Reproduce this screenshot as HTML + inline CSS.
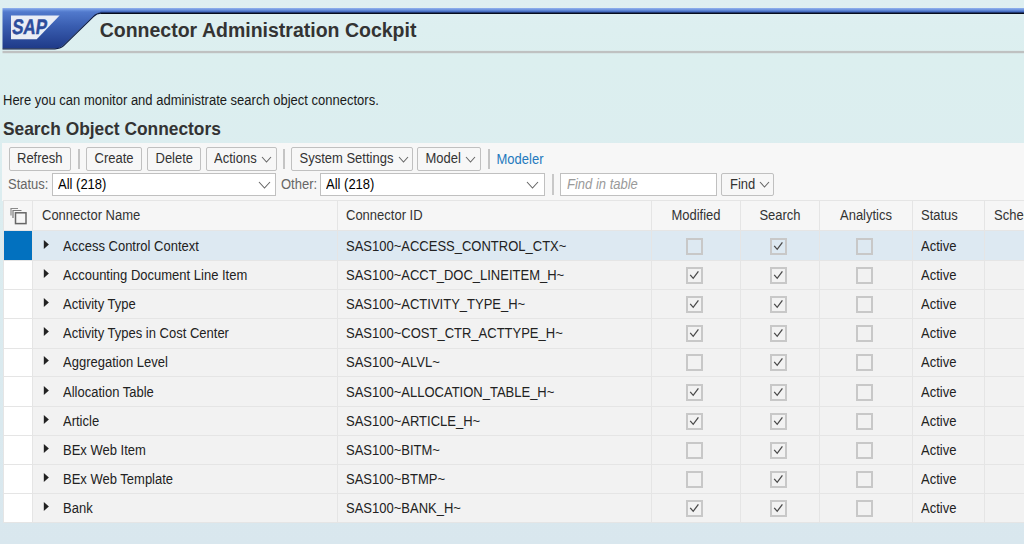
<!DOCTYPE html>
<html><head><meta charset="utf-8"><style>
html,body{margin:0;padding:0;}
body{width:1024px;height:544px;overflow:hidden;position:relative;background:linear-gradient(#deeff1 0px,#dcefef 60px,#dcedf0 200px,#d9e7ee 544px);font-family:"Liberation Sans",sans-serif;font-size:13px;color:#222;}
.abs{position:absolute;}
.t{position:absolute;line-height:15px;white-space:nowrap;font-size:13px;transform:scaleY(1.08);transform-origin:0 12px;}
.title{font-size:19.5px;font-weight:bold;line-height:20px;color:#333;}
.h2{font-size:17.35px;font-weight:bold;line-height:18px;color:#333;}
.btn{position:absolute;box-sizing:border-box;border:1px solid #c0c0c0;border-radius:2px;background:#f7f7f7;}
.inp{position:absolute;box-sizing:border-box;border:1px solid #c0c0c0;background:#fff;}
</style></head><body>

<svg class="abs" style="left:0;top:0" width="1024" height="56">
  <defs>
    <linearGradient id="bg1" gradientUnits="userSpaceOnUse" x1="0" y1="8" x2="0" y2="48.5">
      <stop offset="0" stop-color="#93b3ee"/>
      <stop offset="0.05" stop-color="#6890dc"/>
      <stop offset="0.1" stop-color="#5179cc"/>
      <stop offset="0.45" stop-color="#395db0"/>
      <stop offset="1" stop-color="#1f3a88"/>
    </linearGradient>
  </defs>
  <linearGradient id="bar2" gradientUnits="userSpaceOnUse" x1="0" y1="8" x2="0" y2="14">
      <stop offset="0" stop-color="#93b3ee"/>
      <stop offset="0.35" stop-color="#6890dc"/>
      <stop offset="0.65" stop-color="#3c62b8"/>
      <stop offset="0.82" stop-color="#0d1a3c"/>
      <stop offset="1" stop-color="#000"/>
  </linearGradient>
  <path d="M2.5 8 H1024 V13 H101 C97.5 13 95.5 14 93 16.5 L63 45.5 C60.5 47.8 58.5 48.3 55 48.3 H2.5 Z" fill="url(#bg1)"/>
  <rect x="100.5" y="8" width="925" height="6" fill="url(#bar2)"/>
  <path d="M101 13.2 C97.5 13.2 95.8 14.2 93.4 16.6 L63.4 45.9 C60.9 48.2 58.5 48.8 55 48.8 H2.5" fill="none" stroke="#0c1b45" stroke-width="1.2"/>
  <path d="M11 15.6 H59.6 L36.7 39.3 H11 Z" fill="#e9edf6"/>
  <text x="12.6" y="34.3" font-family="Liberation Sans" font-weight="bold" font-size="21" fill="#2c4c9c" stroke="#2c4c9c" stroke-width="0.5" textLength="34.5" lengthAdjust="spacingAndGlyphs" transform="translate(0,27) skewX(-8) translate(0,-27)">SAP</text>
  <rect x="2.5" y="50.9" width="1022" height="2.3" fill="#bfc1c1"/>
</svg>

<div class="t title" style="left:99.7px;top:19.5px">Connector Administration Cockpit</div>
<div class="t " style="left:3px;top:93px;color:#1a1a1a">Here you can monitor and administrate search object connectors.</div>
<div class="t h2" style="left:3px;top:120px">Search Object Connectors</div>
<div class="abs" style="left:2px;top:143px;width:1022px;height:58px;background:#f7f7f7"></div>
<div class="btn" style="left:8.5px;top:147px;width:62.0px;height:24px"></div><div class="t " style="left:17.0px;top:150.5px;color:#333">Refresh</div>
<div class="abs" style="left:77.5px;top:149px;width:2px;height:20px;background:#c4c4c4"></div>
<div class="btn" style="left:86px;top:147px;width:55.5px;height:24px"></div><div class="t " style="left:94.5px;top:150.5px;color:#333">Create</div>
<div class="btn" style="left:147px;top:147px;width:53.5px;height:24px"></div><div class="t " style="left:155.5px;top:150.5px;color:#333">Delete</div>
<div class="btn" style="left:205.5px;top:147px;width:71.0px;height:24px"></div><div class="t " style="left:214.0px;top:150.5px;color:#333">Actions</div>
<svg class="abs" style="left:261px;top:155.5px" width="11" height="7"><path d="M1 1 L5.5 6 L10 1" fill="none" stroke="#666" stroke-width="1.1"/></svg>
<div class="abs" style="left:283px;top:149px;width:2px;height:20px;background:#c4c4c4"></div>
<div class="btn" style="left:291px;top:147px;width:122px;height:24px"></div><div class="t " style="left:299.5px;top:150.5px;color:#333">System Settings</div>
<svg class="abs" style="left:397.5px;top:155.5px" width="11" height="7"><path d="M1 1 L5.5 6 L10 1" fill="none" stroke="#666" stroke-width="1.1"/></svg>
<div class="btn" style="left:417px;top:147px;width:64px;height:24px"></div><div class="t " style="left:425.5px;top:150.5px;color:#333">Model</div>
<svg class="abs" style="left:464.5px;top:155.5px" width="11" height="7"><path d="M1 1 L5.5 6 L10 1" fill="none" stroke="#666" stroke-width="1.1"/></svg>
<div class="abs" style="left:487.5px;top:149px;width:2px;height:20px;background:#c4c4c4"></div>
<div class="t " style="left:496.5px;top:152px;color:#2479bd">Modeler</div>
<div class="t " style="left:8px;top:176.5px;color:#666">Status:</div>
<div class="inp" style="left:52px;top:172.5px;width:224px;height:23px"></div>
<div class="t " style="left:58px;top:176.5px;color:#000">All (218)</div>
<svg class="abs" style="left:257.5px;top:181px" width="13" height="8"><path d="M1 1 L6.5 7 L12 1" fill="none" stroke="#666" stroke-width="1.1"/></svg>
<div class="t " style="left:281px;top:176.5px;color:#666">Other:</div>
<div class="inp" style="left:320px;top:172.5px;width:225px;height:23px"></div>
<div class="t " style="left:326px;top:176.5px;color:#000">All (218)</div>
<svg class="abs" style="left:526px;top:181px" width="13" height="8"><path d="M1 1 L6.5 7 L12 1" fill="none" stroke="#666" stroke-width="1.1"/></svg>
<div class="abs" style="left:552px;top:174px;width:2px;height:21px;background:#c8c8c8"></div>
<div class="inp" style="left:560px;top:172.5px;width:156.5px;height:23px"></div>
<div class="t " style="left:567px;top:176.5px;color:#9a9a9a;font-style:italic">Find in table</div>
<div class="btn" style="left:721px;top:172.5px;width:53px;height:23px"></div>
<div class="t " style="left:730px;top:176.5px;color:#333">Find</div>
<svg class="abs" style="left:758.5px;top:181px" width="11" height="7"><path d="M1 1 L5.5 6 L10 1" fill="none" stroke="#666" stroke-width="1.1"/></svg>
<div class="abs" style="left:3px;top:200px;width:1021px;height:323px;background:#e5e5e5"></div>
<div class="abs" style="left:4px;top:201px;width:1020px;height:29px;background:#f6f6f6"></div>
<div class="abs" style="left:33px;top:231px;width:991px;height:29px;background:#dde9f2"></div>
<div class="abs" style="left:4px;top:231px;width:28px;height:29px;background:#0271bf"></div>
<div class="abs" style="left:33px;top:261px;width:991px;height:28px;background:#f2f2f2"></div>
<div class="abs" style="left:4px;top:261px;width:28px;height:28px;background:#fff"></div>
<div class="abs" style="left:33px;top:290px;width:991px;height:28px;background:#f2f2f2"></div>
<div class="abs" style="left:4px;top:290px;width:28px;height:28px;background:#fff"></div>
<div class="abs" style="left:33px;top:319px;width:991px;height:29px;background:#f2f2f2"></div>
<div class="abs" style="left:4px;top:319px;width:28px;height:29px;background:#fff"></div>
<div class="abs" style="left:33px;top:349px;width:991px;height:27px;background:#f2f2f2"></div>
<div class="abs" style="left:4px;top:349px;width:28px;height:27px;background:#fff"></div>
<div class="abs" style="left:33px;top:377px;width:991px;height:29px;background:#f2f2f2"></div>
<div class="abs" style="left:4px;top:377px;width:28px;height:29px;background:#fff"></div>
<div class="abs" style="left:33px;top:407px;width:991px;height:28px;background:#f2f2f2"></div>
<div class="abs" style="left:4px;top:407px;width:28px;height:28px;background:#fff"></div>
<div class="abs" style="left:33px;top:436px;width:991px;height:28px;background:#f2f2f2"></div>
<div class="abs" style="left:4px;top:436px;width:28px;height:28px;background:#fff"></div>
<div class="abs" style="left:33px;top:465px;width:991px;height:28px;background:#f2f2f2"></div>
<div class="abs" style="left:4px;top:465px;width:28px;height:28px;background:#fff"></div>
<div class="abs" style="left:33px;top:494px;width:991px;height:28px;background:#f2f2f2"></div>
<div class="abs" style="left:4px;top:494px;width:28px;height:28px;background:#fff"></div>
<div class="abs" style="left:32px;top:201px;width:1px;height:321px;background:#e5e5e5"></div>
<div class="abs" style="left:337px;top:201px;width:1px;height:321px;background:#e5e5e5"></div>
<div class="abs" style="left:651px;top:201px;width:1px;height:321px;background:#e5e5e5"></div>
<div class="abs" style="left:740px;top:201px;width:1px;height:321px;background:#e5e5e5"></div>
<div class="abs" style="left:819px;top:201px;width:1px;height:321px;background:#e5e5e5"></div>
<div class="abs" style="left:912px;top:201px;width:1px;height:321px;background:#e5e5e5"></div>
<div class="abs" style="left:984px;top:201px;width:1px;height:321px;background:#e5e5e5"></div>
<svg class="abs" style="left:8px;top:205px" width="22" height="22">
<path d="M3 10.5 V3.5 H10" fill="none" stroke="#8a8a8a" stroke-width="1.2"/>
<path d="M5 13 V5.5 H13.5" fill="none" stroke="#7a7a7a" stroke-width="1.2"/>
<rect x="7.5" y="7.8" width="10.5" height="10.8" fill="none" stroke="#666" stroke-width="1.5"/>
</svg>
<div class="t " style="left:42px;top:207.5px;color:#333">Connector Name</div>
<div class="t " style="left:346px;top:207.5px;color:#333">Connector ID</div>
<div class="t" style="left:652px;width:88px;text-align:center;top:207.5px;color:#333">Modified</div>
<div class="t" style="left:741px;width:78px;text-align:center;top:207.5px;color:#333">Search</div>
<div class="t" style="left:820px;width:92px;text-align:center;top:207.5px;color:#333">Analytics</div>
<div class="t " style="left:921px;top:207.5px;color:#333">Status</div>
<div class="t " style="left:994px;top:207.5px;color:#333">Schedule</div>
<svg class="abs" style="left:43px;top:239px" width="7" height="11"><path d="M0.8 0.9 L5.9 5.4 L0.8 9.9 Z" fill="#222"/></svg>
<div class="t " style="left:63px;top:239px;">Access Control Context</div>
<div class="t " style="left:346px;top:239px;">SAS100~ACCESS_CONTROL_CTX~</div>
<svg class="abs" style="left:686px;top:238px" width="17" height="17"><rect x="1" y="1" width="15" height="15" fill="none" stroke="#c8c8c8" stroke-width="2"/></svg>
<svg class="abs" style="left:770px;top:238px" width="17" height="17"><rect x="1" y="1" width="15" height="15" fill="none" stroke="#c8c8c8" stroke-width="2"/><path d="M4.2 7.8 L7.2 11.3 L12.4 4.3" fill="none" stroke="#4a4a4a" stroke-width="1.3"/></svg>
<svg class="abs" style="left:856px;top:238px" width="17" height="17"><rect x="1" y="1" width="15" height="15" fill="none" stroke="#c8c8c8" stroke-width="2"/></svg>
<div class="t " style="left:921px;top:239px;">Active</div>
<svg class="abs" style="left:43px;top:268px" width="7" height="11"><path d="M0.8 0.9 L5.9 5.4 L0.8 9.9 Z" fill="#222"/></svg>
<div class="t " style="left:63px;top:268px;">Accounting Document Line Item</div>
<div class="t " style="left:346px;top:268px;">SAS100~ACCT_DOC_LINEITEM_H~</div>
<svg class="abs" style="left:686px;top:267px" width="17" height="17"><rect x="1" y="1" width="15" height="15" fill="none" stroke="#c8c8c8" stroke-width="2"/><path d="M4.2 7.8 L7.2 11.3 L12.4 4.3" fill="none" stroke="#4a4a4a" stroke-width="1.3"/></svg>
<svg class="abs" style="left:770px;top:267px" width="17" height="17"><rect x="1" y="1" width="15" height="15" fill="none" stroke="#c8c8c8" stroke-width="2"/><path d="M4.2 7.8 L7.2 11.3 L12.4 4.3" fill="none" stroke="#4a4a4a" stroke-width="1.3"/></svg>
<svg class="abs" style="left:856px;top:267px" width="17" height="17"><rect x="1" y="1" width="15" height="15" fill="none" stroke="#c8c8c8" stroke-width="2"/></svg>
<div class="t " style="left:921px;top:268px;">Active</div>
<svg class="abs" style="left:43px;top:297px" width="7" height="11"><path d="M0.8 0.9 L5.9 5.4 L0.8 9.9 Z" fill="#222"/></svg>
<div class="t " style="left:63px;top:297px;">Activity Type</div>
<div class="t " style="left:346px;top:297px;">SAS100~ACTIVITY_TYPE_H~</div>
<svg class="abs" style="left:686px;top:296px" width="17" height="17"><rect x="1" y="1" width="15" height="15" fill="none" stroke="#c8c8c8" stroke-width="2"/><path d="M4.2 7.8 L7.2 11.3 L12.4 4.3" fill="none" stroke="#4a4a4a" stroke-width="1.3"/></svg>
<svg class="abs" style="left:770px;top:296px" width="17" height="17"><rect x="1" y="1" width="15" height="15" fill="none" stroke="#c8c8c8" stroke-width="2"/><path d="M4.2 7.8 L7.2 11.3 L12.4 4.3" fill="none" stroke="#4a4a4a" stroke-width="1.3"/></svg>
<svg class="abs" style="left:856px;top:296px" width="17" height="17"><rect x="1" y="1" width="15" height="15" fill="none" stroke="#c8c8c8" stroke-width="2"/></svg>
<div class="t " style="left:921px;top:297px;">Active</div>
<svg class="abs" style="left:43px;top:326px" width="7" height="11"><path d="M0.8 0.9 L5.9 5.4 L0.8 9.9 Z" fill="#222"/></svg>
<div class="t " style="left:63px;top:326px;">Activity Types in Cost Center</div>
<div class="t " style="left:346px;top:326px;">SAS100~COST_CTR_ACTTYPE_H~</div>
<svg class="abs" style="left:686px;top:325px" width="17" height="17"><rect x="1" y="1" width="15" height="15" fill="none" stroke="#c8c8c8" stroke-width="2"/><path d="M4.2 7.8 L7.2 11.3 L12.4 4.3" fill="none" stroke="#4a4a4a" stroke-width="1.3"/></svg>
<svg class="abs" style="left:770px;top:325px" width="17" height="17"><rect x="1" y="1" width="15" height="15" fill="none" stroke="#c8c8c8" stroke-width="2"/><path d="M4.2 7.8 L7.2 11.3 L12.4 4.3" fill="none" stroke="#4a4a4a" stroke-width="1.3"/></svg>
<svg class="abs" style="left:856px;top:325px" width="17" height="17"><rect x="1" y="1" width="15" height="15" fill="none" stroke="#c8c8c8" stroke-width="2"/></svg>
<div class="t " style="left:921px;top:326px;">Active</div>
<svg class="abs" style="left:43px;top:355px" width="7" height="11"><path d="M0.8 0.9 L5.9 5.4 L0.8 9.9 Z" fill="#222"/></svg>
<div class="t " style="left:63px;top:355px;">Aggregation Level</div>
<div class="t " style="left:346px;top:355px;">SAS100~ALVL~</div>
<svg class="abs" style="left:686px;top:354px" width="17" height="17"><rect x="1" y="1" width="15" height="15" fill="none" stroke="#c8c8c8" stroke-width="2"/></svg>
<svg class="abs" style="left:770px;top:354px" width="17" height="17"><rect x="1" y="1" width="15" height="15" fill="none" stroke="#c8c8c8" stroke-width="2"/><path d="M4.2 7.8 L7.2 11.3 L12.4 4.3" fill="none" stroke="#4a4a4a" stroke-width="1.3"/></svg>
<svg class="abs" style="left:856px;top:354px" width="17" height="17"><rect x="1" y="1" width="15" height="15" fill="none" stroke="#c8c8c8" stroke-width="2"/></svg>
<div class="t " style="left:921px;top:355px;">Active</div>
<svg class="abs" style="left:43px;top:385px" width="7" height="11"><path d="M0.8 0.9 L5.9 5.4 L0.8 9.9 Z" fill="#222"/></svg>
<div class="t " style="left:63px;top:385px;">Allocation Table</div>
<div class="t " style="left:346px;top:385px;">SAS100~ALLOCATION_TABLE_H~</div>
<svg class="abs" style="left:686px;top:384px" width="17" height="17"><rect x="1" y="1" width="15" height="15" fill="none" stroke="#c8c8c8" stroke-width="2"/><path d="M4.2 7.8 L7.2 11.3 L12.4 4.3" fill="none" stroke="#4a4a4a" stroke-width="1.3"/></svg>
<svg class="abs" style="left:770px;top:384px" width="17" height="17"><rect x="1" y="1" width="15" height="15" fill="none" stroke="#c8c8c8" stroke-width="2"/><path d="M4.2 7.8 L7.2 11.3 L12.4 4.3" fill="none" stroke="#4a4a4a" stroke-width="1.3"/></svg>
<svg class="abs" style="left:856px;top:384px" width="17" height="17"><rect x="1" y="1" width="15" height="15" fill="none" stroke="#c8c8c8" stroke-width="2"/></svg>
<div class="t " style="left:921px;top:385px;">Active</div>
<svg class="abs" style="left:43px;top:414px" width="7" height="11"><path d="M0.8 0.9 L5.9 5.4 L0.8 9.9 Z" fill="#222"/></svg>
<div class="t " style="left:63px;top:414px;">Article</div>
<div class="t " style="left:346px;top:414px;">SAS100~ARTICLE_H~</div>
<svg class="abs" style="left:686px;top:413px" width="17" height="17"><rect x="1" y="1" width="15" height="15" fill="none" stroke="#c8c8c8" stroke-width="2"/><path d="M4.2 7.8 L7.2 11.3 L12.4 4.3" fill="none" stroke="#4a4a4a" stroke-width="1.3"/></svg>
<svg class="abs" style="left:770px;top:413px" width="17" height="17"><rect x="1" y="1" width="15" height="15" fill="none" stroke="#c8c8c8" stroke-width="2"/><path d="M4.2 7.8 L7.2 11.3 L12.4 4.3" fill="none" stroke="#4a4a4a" stroke-width="1.3"/></svg>
<svg class="abs" style="left:856px;top:413px" width="17" height="17"><rect x="1" y="1" width="15" height="15" fill="none" stroke="#c8c8c8" stroke-width="2"/></svg>
<div class="t " style="left:921px;top:414px;">Active</div>
<svg class="abs" style="left:43px;top:443px" width="7" height="11"><path d="M0.8 0.9 L5.9 5.4 L0.8 9.9 Z" fill="#222"/></svg>
<div class="t " style="left:63px;top:443px;">BEx Web Item</div>
<div class="t " style="left:346px;top:443px;">SAS100~BITM~</div>
<svg class="abs" style="left:686px;top:442px" width="17" height="17"><rect x="1" y="1" width="15" height="15" fill="none" stroke="#c8c8c8" stroke-width="2"/></svg>
<svg class="abs" style="left:770px;top:442px" width="17" height="17"><rect x="1" y="1" width="15" height="15" fill="none" stroke="#c8c8c8" stroke-width="2"/><path d="M4.2 7.8 L7.2 11.3 L12.4 4.3" fill="none" stroke="#4a4a4a" stroke-width="1.3"/></svg>
<svg class="abs" style="left:856px;top:442px" width="17" height="17"><rect x="1" y="1" width="15" height="15" fill="none" stroke="#c8c8c8" stroke-width="2"/></svg>
<div class="t " style="left:921px;top:443px;">Active</div>
<svg class="abs" style="left:43px;top:472px" width="7" height="11"><path d="M0.8 0.9 L5.9 5.4 L0.8 9.9 Z" fill="#222"/></svg>
<div class="t " style="left:63px;top:472px;">BEx Web Template</div>
<div class="t " style="left:346px;top:472px;">SAS100~BTMP~</div>
<svg class="abs" style="left:686px;top:471px" width="17" height="17"><rect x="1" y="1" width="15" height="15" fill="none" stroke="#c8c8c8" stroke-width="2"/></svg>
<svg class="abs" style="left:770px;top:471px" width="17" height="17"><rect x="1" y="1" width="15" height="15" fill="none" stroke="#c8c8c8" stroke-width="2"/><path d="M4.2 7.8 L7.2 11.3 L12.4 4.3" fill="none" stroke="#4a4a4a" stroke-width="1.3"/></svg>
<svg class="abs" style="left:856px;top:471px" width="17" height="17"><rect x="1" y="1" width="15" height="15" fill="none" stroke="#c8c8c8" stroke-width="2"/></svg>
<div class="t " style="left:921px;top:472px;">Active</div>
<svg class="abs" style="left:43px;top:501px" width="7" height="11"><path d="M0.8 0.9 L5.9 5.4 L0.8 9.9 Z" fill="#222"/></svg>
<div class="t " style="left:63px;top:501px;">Bank</div>
<div class="t " style="left:346px;top:501px;">SAS100~BANK_H~</div>
<svg class="abs" style="left:686px;top:500px" width="17" height="17"><rect x="1" y="1" width="15" height="15" fill="none" stroke="#c8c8c8" stroke-width="2"/><path d="M4.2 7.8 L7.2 11.3 L12.4 4.3" fill="none" stroke="#4a4a4a" stroke-width="1.3"/></svg>
<svg class="abs" style="left:770px;top:500px" width="17" height="17"><rect x="1" y="1" width="15" height="15" fill="none" stroke="#c8c8c8" stroke-width="2"/><path d="M4.2 7.8 L7.2 11.3 L12.4 4.3" fill="none" stroke="#4a4a4a" stroke-width="1.3"/></svg>
<svg class="abs" style="left:856px;top:500px" width="17" height="17"><rect x="1" y="1" width="15" height="15" fill="none" stroke="#c8c8c8" stroke-width="2"/></svg>
<div class="t " style="left:921px;top:501px;">Active</div>
</body></html>
